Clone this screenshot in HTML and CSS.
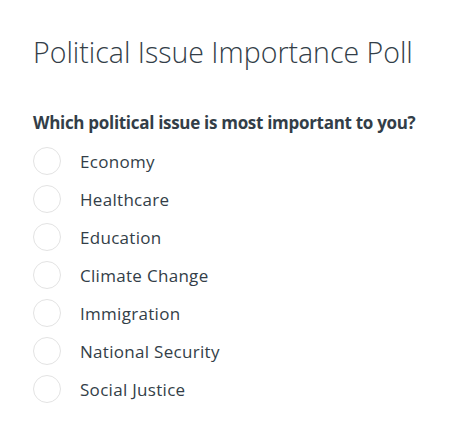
FILE: index.html
```html
<!DOCTYPE html>
<html>
<head>
<meta charset="utf-8">
<link rel="stylesheet" href="styles.css">
</head>
<body>
<main class="poll">
  <h1 class="title">Political Issue Importance Poll</h1>
  <form class="question">
    <h2 class="prompt">Which political issue is most important to you?</h2>
    <ul class="options">
      <li class="option"><span class="radio"></span><span class="label">Economy</span></li>
      <li class="option"><span class="radio"></span><span class="label">Healthcare</span></li>
      <li class="option"><span class="radio"></span><span class="label">Education</span></li>
      <li class="option"><span class="radio"></span><span class="label">Climate Change</span></li>
      <li class="option"><span class="radio"></span><span class="label">Immigration</span></li>
      <li class="option"><span class="radio"></span><span class="label">National Security</span></li>
      <li class="option"><span class="radio"></span><span class="label">Social Justice</span></li>
    </ul>
  </form>
</main>
</body>
</html>
```
FILE: styles.css
```css
html, body {
  margin: 0;
  padding: 0;
  background: #ffffff;
}
body {
  font-family: "Open Sans", "Liberation Sans", sans-serif;
  color: #333e48;
}
.poll {
  padding: 34px 0 0 33px;
}
.title {
  margin: 0;
  font-family: "Open Sans", sans-serif;
  font-weight: 300;
  font-size: 28.5px;
  line-height: 36px;
  color: #333e48;
}
.question {
  margin: 0;
  padding-top: 41px;
}
.prompt {
  margin: 0;
  font-size: 17px;
  font-weight: 700;
  letter-spacing: -0.3px;
  line-height: 24px;
  color: #333e48;
}
.options {
  list-style: none;
  margin: 0;
  padding: 0;
  padding-top: 12px;
  display: flex;
  flex-direction: column;
  gap: 10px;
}
.option {
  display: flex;
  align-items: center;
  gap: 19px;
  height: 28px;
}
.radio {
  box-sizing: border-box;
  width: 28px;
  height: 28px;
  border: 1.5px solid #e3e3e3;
  border-radius: 50%;
  flex: none;
}
.label {
  font-size: 17px;
  letter-spacing: 0.3px;
  color: #333e48;
}
```
